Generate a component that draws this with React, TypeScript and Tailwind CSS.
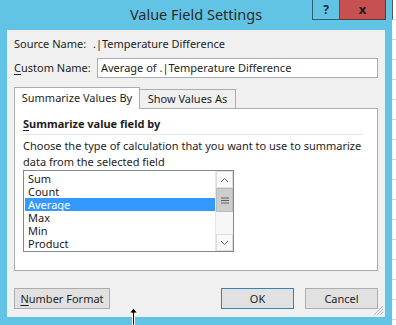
import React from "react";

const FONT = { fontFamily: '"Segoe UI", "Noto Sans", Arial, sans-serif' };

const ITEMS = ["Sum", "Count", "Average", "Max", "Min", "Product"];

function Underlined({ ch, rest }: { ch: string; rest: string }) {
  return (
    <span>
      <span className="underline underline-offset-2">{ch}</span>
      {rest}
    </span>
  );
}

function ListBox() {
  return (
    <div className="flex w-[211px] h-[82px] border border-[#828790] bg-white">
      <div className="flex-1 pt-[1px] pl-[1px]">
        {ITEMS.map((it) => (
          <div
            key={it}
            className={`h-[13px] leading-[13px] pl-[3px] ${
              it === "Average" ? "bg-[#3399ff] text-white" : "text-[#1a1a1a]"
            }`}
          >
            {it}
          </div>
        ))}
      </div>
      <div className="w-[18px] flex flex-col bg-[#f7f7f7] border-l border-[#e6e6e6]">
        <div className="h-[17px] flex items-center justify-center border border-[#dedede] bg-[#fafafa]">
          <svg width="9" height="6" viewBox="0 0 9 6">
            <path d="M1 5 L4.5 1.5 L8 5" fill="none" stroke="#606060" strokeWidth="1" />
          </svg>
        </div>
        <div className="h-[24px] flex items-center justify-center bg-[#cdcdcd] border border-[#bcbcbc]">
          <svg width="8" height="7" viewBox="0 0 8 7">
            <path d="M0 1H8M0 3.5H8M0 6H8" stroke="#606060" strokeWidth="1" />
          </svg>
        </div>
        <div className="flex-1" />
        <div className="h-[17px] flex items-center justify-center border border-[#dedede] bg-[#fafafa]">
          <svg width="9" height="6" viewBox="0 0 9 6">
            <path d="M1 1 L4.5 4.5 L8 1" fill="none" stroke="#606060" strokeWidth="1" />
          </svg>
        </div>
      </div>
    </div>
  );
}

export default function App() {
  return (
    <div className="w-[396px] h-[325px] flex bg-white overflow-hidden text-[11px] text-[#1e1e1e] whitespace-nowrap" style={FONT}>
      {/* dialog window */}
      <div className="w-[392px] h-[325px] bg-[#62c4e4] flex flex-col relative">
        {/* title bar */}
        <div className="h-[30px] relative flex items-center justify-center">
          <span className="text-[14.5px] text-[#2b2b2b]">Value Field Settings</span>
          <div className="absolute top-0 right-[6px] flex h-[20px]">
            <div className="w-[28px] border border-[#2f5d72] border-t-0 flex items-center justify-center font-bold text-[12px] text-[#1b2b3a]">
              ?
            </div>
            <div className="w-[46px] bg-[#c75050] border border-[#6b3434] border-t-0 border-l-0 flex items-center justify-center font-bold text-[13px] text-[#1a1a1a]">
              x
            </div>
          </div>
        </div>

        {/* client area */}
        <div className="mx-[7px] h-[287px] bg-[#f0f0f0] flex flex-col px-[7px] relative">
          <div className="flex h-[28px] items-center pt-[1px]">
            <span className="w-[79px]">Source Name:</span>
            <span>.|Temperature Difference</span>
          </div>
          <div className="flex items-center h-[20px]">
            <span className="w-[83px]">
              <Underlined ch="C" rest="ustom Name:" />
            </span>
            <div className="flex-1 h-[20px] bg-white border border-[#abadb3] flex items-center pl-[3px]">
              Average of .|Temperature Difference
            </div>
          </div>

          {/* tabs */}
          <div className="flex mt-[8px] h-[22px] items-end">
            <div className="h-[22px] w-[126px] bg-white border border-[#acacac] border-b-0 flex items-center justify-center relative z-10 -mb-px pb-[1px]">
              Summarize Values By
            </div>
            <div className="h-[19px] w-[96px] bg-[#f0f0f0] border border-[#acacac] border-l-0 border-b-0 flex items-center justify-center">
              Show Values As
            </div>
          </div>
          <div className="h-[163px] bg-white border border-[#acacac] px-[8px]">
            <div className="flex items-center h-[25px] pt-[5px]">
              <span className="font-bold">
                <Underlined ch="S" rest="ummarize value field by" />
              </span>
            </div>
            <div className="h-px bg-[#e8e8e8] mr-[6px]" />
            <div className="leading-[16px] mt-[3px]">
              Choose the type of calculation that you want to use to summarize
              <br />
              data from the selected field
            </div>
            <ListBox />
          </div>

          {/* buttons */}
          <div className="flex items-center mt-[17px]">
            <button className="w-[96px] h-[21px] bg-[#e1e1e1] border border-[#adadad] leading-none">
              <Underlined ch="N" rest="umber Format" />
            </button>
            <div className="flex-1" />
            <button className="w-[73px] h-[21px] bg-[#e1e1e1] border border-[#3c7fb1] leading-none">
              OK
            </button>
            <button className="w-[73px] h-[21px] bg-[#e1e1e1] border border-[#adadad] ml-[11px] leading-none">
              Cancel
            </button>
          </div>

          {/* resize grip */}
          <svg className="absolute right-[1px] bottom-[1px]" width="10" height="10" viewBox="0 0 10 10">
            <path d="M9 3 L3 9 M9 6 L6 9 M9 0 L0 9" stroke="#b8b8b8" strokeWidth="1" />
          </svg>
        </div>

        {/* mouse cursor */}
        <svg className="absolute left-[128px] top-[307px]" width="11" height="18" viewBox="0 0 11 18">
          <path d="M5.5 1 L9.5 6 L6.5 6 L6.5 18 L4.5 18 L4.5 6 L1.5 6 Z" fill="#000" stroke="#fff" strokeWidth="1" />
        </svg>
      </div>

      {/* background sheet strip */}
      <div className="flex-1 flex flex-col bg-white">
        <div className="h-[20px] border-l border-[#5a5a5a] border-b border-b-[#d4d4d4]" />
        {Array.from({ length: 15 }).map((_, i) => (
          <div key={i} className="h-[20px] border-b border-[#d4d4d4]" />
        ))}
      </div>
    </div>
  );
}
